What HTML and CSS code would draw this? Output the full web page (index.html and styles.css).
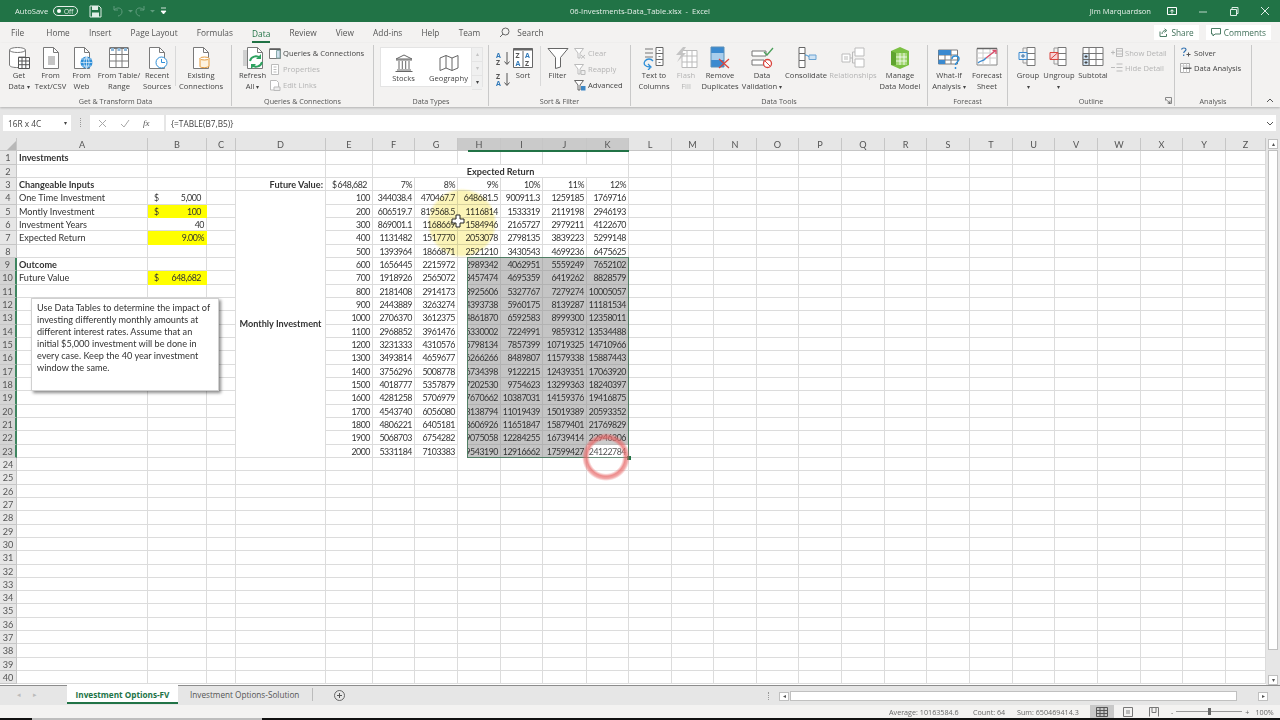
FILE: index.html
```html
<!DOCTYPE html>
<html>
	<head>
		<meta charset="utf-8" />
		<title>06-Investments-Data_Table.xlsx - Excel</title>
		<link rel="stylesheet" href="styles.css">
	</head>
	<body>
		<svg class="sprite">
			<symbol id="doc" viewBox="0 0 24 24"><path d="M4.5 1.5h10l5 5v16h-15z" fill="#fff" stroke="#7a7a7a"/><path d="M14.5 1.5v5h5" fill="none" stroke="#7a7a7a"/></symbol>
			<symbol id="tbl" viewBox="0 0 24 24"><path d="M2.5 2.5h19v19h-19zM2.5 8.5h19M2.5 15h19M9 2.5v19M15 2.5v19" fill="#fff" stroke="#7a7a7a"/></symbol>
		</svg>

		<header class="titlebar">
			<div class="qat">
				<span class="autosave">AutoSave</span>
				<span class="toggle"><i></i>Off</span>
				<svg class="qat-save" width="13" height="13" viewBox="0 0 13 13"><path d="M1 1h9l2 2v9H1z" fill="none" stroke="#dfeee6"/><path d="M3 1h6v4H3zM3 7.5h7V12H3z" fill="#dfeee6"/></svg>
				<svg class="qat-undo" width="24" height="12" viewBox="0 0 24 12"><path d="M3 1v4h4M3 5c3-3 8-3 8 2 0 2-2 4-4 4" fill="none" stroke="#5f9c7d"/><path d="M17 5h5l-2.500 2.500z" fill="#5f9c7d"/></svg>
				<svg class="qat-redo" width="24" height="12" viewBox="0 0 24 12"><path d="M11 1v4H7M11 5c-3-3-8-3-8 2 0 2 2 4 4 4" fill="none" stroke="#5f9c7d"/><path d="M17 5h5l-2.500 2.500z" fill="#5f9c7d"/></svg>
				<svg class="qat-more" width="7" height="8" viewBox="0 0 7 8"><path d="M1 1h5M1 4h5l-2.500 3z" fill="#fff" stroke="#fff" stroke-width=".8"/></svg>
			</div>
			<div class="doc-title">06-Investments-Data_Table.xlsx&nbsp; -&nbsp; Excel</div>
			<div class="win">
				<span class="user">Jim Marquardson</span>
				<svg width="10" height="9" viewBox="0 0 10 9"><path d="M.5.5h9v7h-9z" fill="none" stroke="#fff"/><path d="M5 6.500V3M3.200 4.500 5 2.700l1.800 1.800" fill="none" stroke="#fff"/></svg>
				<svg width="10" height="9" viewBox="0 0 10 9"><path d="M1 5h8" stroke="#bcd6c8"/></svg>
				<svg width="10" height="9" viewBox="0 0 10 9"><path d="M1.500 2.500h6v6h-6zM3 2.500V.5h6v6H7.500" fill="none" stroke="#dfeee6"/></svg>
				<svg width="10" height="10" viewBox="0 0 10 10"><path d="M1 1l8 8M9 1 1 9" stroke="#dfeee6"/></svg>
			</div>
		</header>

		<nav class="tabs">
			<a>File</a><a class="home">Home</a><a>Insert</a><a>Page Layout</a><a>Formulas</a><a class="on">Data</a><a>Review</a><a>View</a><a>Add-ins</a><a>Help</a><a>Team</a>
			<a class="search"><svg width="11" height="11" viewBox="0 0 11 11"><circle cx="6.500" cy="4.500" r="3.500" fill="none" stroke="#666"/><path d="M4 7 1 10" stroke="#666"/></svg>Search</a>
			<div class="share-box">
				<span class="pill"><svg width="9" height="9" viewBox="0 0 9 9"><path d="M1 3.500v5h6.500V6M3 6c0-2 1.500-3.500 3.500-3.500M5.500 .8 7.800 2.500 5.500 4.400" fill="none" stroke="#4d7d66"/></svg>Share</span>
				<span class="pill"><svg width="10" height="9" viewBox="0 0 10 9"><path d="M.5.5h9v5.500H4L2 8V6H.5z" fill="none" stroke="#4d7d66"/></svg>Comments</span>
			</div>
		</nav>

		<section class="ribbon">
			<div class="group g-get">
				<div class="btns">
					<div class="btn">
						<svg width="24" height="24" viewBox="0 0 24 24"><path d="M2.500 4v15c0 1.500 3 2.500 7 2.500h2V11h7V4" fill="#fff" stroke="#7a7a7a"/><ellipse cx="10.500" cy="4" rx="8" ry="2.500" fill="#fff" stroke="#7a7a7a"/><path d="M11.500 11.500h11v11h-11zM11.500 15h11M11.500 18.700h11M15 11.500v11M18.800 11.500v11" fill="#fff" stroke="#555"/></svg>
						<span>Get<br>Data <b>▾</b></span>
					</div>
					<div class="btn">
						<svg width="24" height="24" viewBox="0 0 24 24"><use href="#doc"/><path d="M9 10h7v9H9z" fill="#c4c4c4"/></svg>
						<span>From<br>Text/CSV</span>
					</div>
					<div class="btn">
						<svg width="24" height="24" viewBox="0 0 24 24"><use href="#doc"/><circle cx="16.500" cy="16.500" r="6" fill="#2f8fd8"/><path d="M10.500 16.500h12M16.500 10.500v12M12 13h9M12 20h9M16.500 10.500c-3.500 4-3.500 8 0 12M16.500 10.500c3.500 4 3.500 8 0 12" fill="none" stroke="#fff" stroke-width=".6"/></svg>
						<span>From<br>Web</span>
					</div>
					<div class="btn">
						<svg width="24" height="24" viewBox="0 0 24 24"><use href="#tbl"/><path d="M2.500 1h19v2h-19z" fill="#777"/><path d="M4 3.500h3M10.500 3.500h3M17 3.500h3" stroke="#8fb7d8" stroke-width="3"/></svg>
						<span>From Table/<br>Range</span>
					</div>
					<div class="btn">
						<svg width="24" height="24" viewBox="0 0 24 24"><use href="#doc"/><circle cx="16.500" cy="16.500" r="5.500" fill="#fff" stroke="#2f8fd8"/><path d="M16.500 13v3.500H20" fill="none" stroke="#2f8fd8"/></svg>
						<span>Recent<br>Sources</span>
					</div>
					<div class="btn btn-sep">
						<svg width="24" height="24" viewBox="0 0 24 24"><use href="#doc"/><path d="M11 12.500v8c0 1 5 2 9 0v-8z" fill="#fdf3e0" stroke="#e59b3a"/><ellipse cx="15.500" cy="12.500" rx="4.500" ry="1.500" fill="#fff" stroke="#e59b3a"/></svg>
						<span>Existing<br>Connections</span>
					</div>
				</div>
				<div class="group-label">Get &amp; Transform Data</div>
			</div>

			<div class="group g-queries">
				<div class="btns">
					<div class="btn">
						<svg width="24" height="24" viewBox="0 0 24 24"><path d="M2 4h7v16H2z" fill="#d0d0d0"/><use href="#doc" x="2"/><path d="M9 15a6 6 0 0 1 10-3M21 16a6 6 0 0 1-10 3" fill="none" stroke="#2da15f" stroke-width="2"/><path d="M20 8v5h-5zM10 23v-5h5z" fill="#2da15f"/></svg>
						<span>Refresh<br>All <b>▾</b></span>
					</div>
					<div class="small-list">
						<div class="small"><svg width="12" height="11" viewBox="0 0 12 11"><path d="M.5 1.500h11v9H.5z" fill="#fff" stroke="#777"/><path d="M.5 1h11" stroke="#555" stroke-width="1.500"/><path d="M7.500 2.500h3.500v7.500H7.500z" fill="#cfe0ee" stroke="#8aa"/></svg>Queries &amp; Connections</div>
						<div class="small dim"><svg width="12" height="11" viewBox="0 0 12 11"><path d="M2.500.5h7v10h-7z" fill="#fff" stroke="#bbb"/><path d="M4.500 3h3M4.500 5.500h3M4.500 8h3" stroke="#bbb"/></svg>Properties</div>
						<div class="small dim"><svg width="12" height="11" viewBox="0 0 12 11"><path d="M1.500.5h6l2 2V10h-8z" fill="#fff" stroke="#bbb"/><path d="M5 7h6v3.500H5z" fill="#eee" stroke="#bbb"/></svg>Edit Links</div>
					</div>
				</div>
				<div class="group-label">Queries &amp; Connections</div>
			</div>

			<div class="group g-types">
				<div class="gallery">
					<div class="gallery-item">
						<svg width="20" height="18" viewBox="0 0 20 18"><path d="M10 1 2 5h16zM2 6h16M3 16h14M1.500 17.500h17M5 7v8M8.300 7v8M11.700 7v8M15 7v8" fill="none" stroke="#666"/></svg>
						<span>Stocks</span>
					</div>
					<div class="gallery-item">
						<svg width="20" height="18" viewBox="0 0 20 18"><path d="M1 4l6-2.500 6 2.500 6-2.500V14l-6 2.500L7 14l-6 2.500zM7 1.500V14M13 4v12.500" fill="#fff" stroke="#666"/></svg>
						<span>Geography</span>
					</div>
					<div class="gallery-scroll">
						<i class="dim-arrow">▴</i><i class="dim-arrow">▾</i><i>▾</i>
					</div>
				</div>
				<div class="group-label">Data Types</div>
			</div>

			<div class="group g-sort">
				<div class="btns">
					<div class="sort-pair">
						<svg width="15" height="15" viewBox="0 0 15 15"><text x="0" y="6.500" class="az blue">A</text><text x="0" y="13.500" class="az">Z</text><path d="M11 1v12M8.500 10.500 11 13.500l2.500-3" fill="none" stroke="#555"/></svg>
						<svg width="15" height="15" viewBox="0 0 15 15"><text x="0" y="6.500" class="az">Z</text><text x="0" y="13.500" class="az blue">A</text><path d="M11 1v12M8.500 10.500 11 13.500l2.500-3" fill="none" stroke="#555"/></svg>
					</div>
					<div class="btn btn-sort">
						<svg width="20" height="20" viewBox="0 0 20 20"><path d="M.5.500h19v19H.5z" fill="#fff" stroke="#666"/><path d="M.5 1.500h19" stroke="#666" stroke-width="2"/><path d="M10 3v16" stroke="#666"/><text x="2.500" y="9.500" class="az">Z</text><text x="2.500" y="17.500" class="az blue">A</text><text x="12" y="9.500" class="az blue">A</text><text x="12" y="17.500" class="az">Z</text></svg>
						<span>Sort</span>
					</div>
					<div class="btn btn-sep btn-filter">
						<svg width="24" height="24" viewBox="0 0 24 24"><path d="M2 2.500h20l-7.500 9V21l-5 1.500v-11z" fill="#fff" stroke="#666"/></svg>
						<span>Filter</span>
					</div>
					<div class="small-list">
						<div class="small dim"><svg width="12" height="11" viewBox="0 0 12 11"><path d="M.5.500h9L6 5v5H4V5z" fill="#fff" stroke="#bbb"/><path d="M7 7l4 3.500M11 7l-4 3.500" stroke="#bbb"/></svg>Clear</div>
						<div class="small dim"><svg width="12" height="11" viewBox="0 0 12 11"><path d="M.5.500h9L6 5v5H4V5z" fill="#fff" stroke="#bbb"/><path d="M7 6.500h4v4H7z" fill="#eee" stroke="#bbb"/></svg>Reapply</div>
						<div class="small"><svg width="12" height="11" viewBox="0 0 12 11"><path d="M.5.500h9L6 5v5H4V5z" fill="#fff" stroke="#666"/><path d="M7 6h4.500v4.500H7z" fill="#3c86c4"/></svg>Advanced</div>
					</div>
				</div>
				<div class="group-label">Sort &amp; Filter</div>
			</div>

			<div class="group g-tools">
				<div class="btns">
					<div class="btn">
						<svg width="24" height="24" viewBox="0 0 24 24"><path d="M3 3h8M3 7h8M3 11h8" stroke="#777"/><path d="M14 1.500h7v18h-7zM14 7.500h7M14 13.500h7" fill="#fff" stroke="#666"/><path d="M16.500 4.500h2M16.500 10.500h2M16.500 16.500h2" stroke="#777"/><path d="M11 15a5 5 0 0 0-8 0c-2 3 0 6 5 6M6 18l3 3-3 3" fill="none" stroke="#2f8fd8" stroke-width="1.300"/></svg>
						<span>Text to<br>Columns</span>
					</div>
					<div class="btn dim">
						<svg width="24" height="24" viewBox="0 0 24 24"><path d="M8 4.500h15v17H8zM8 10h15M8 16h15M13 4.500v17M18 4.500v17" fill="#fff" stroke="#bbb"/><path d="M9 1 2 9h5l-4 7 9-9H8l4-6z" fill="#c4c4c4"/></svg>
						<span>Flash<br>Fill</span>
					</div>
					<div class="btn">
						<svg width="24" height="24" viewBox="0 0 24 24"><path d="M3 1h13v6H3z" fill="#3b8ad0"/><path d="M3 7h13v7H3z" fill="#a8cdec"/><path d="M3 14h13v7H3z" fill="#3b8ad0"/><path d="M3 1h13v20H3z" fill="none" stroke="#5b8fb8"/><path d="M11 13l10 9M21 13l-10 9" stroke="#d9453e" stroke-width="1.300"/></svg>
						<span>Remove<br>Duplicates</span>
					</div>
					<div class="btn">
						<svg width="24" height="24" viewBox="0 0 24 24"><path d="M2 5h14v5H2zM2 14h12v5H2z" fill="#fff" stroke="#777"/><path d="M14 6l3 3 6-7" fill="none" stroke="#4ba05b" stroke-width="1.300"/><circle cx="17.500" cy="17.500" r="4" fill="#fff" stroke="#d9453e" stroke-width="1.300"/><path d="M15 15l5 5" stroke="#d9453e"/></svg>
						<span>Data<br>Validation <b>▾</b></span>
					</div>
					<div class="btn">
						<svg width="24" height="24" viewBox="0 0 24 24"><path d="M5 1.500h6v6H5zM5 7.500h6v7H5zM5 14.500h6v7H5z" fill="#fff" stroke="#666"/><path d="M11 9c3 0 3 2 5 2h3" fill="none" stroke="#2f8fd8"/><path d="M15 9h7v4.500h-7z" fill="#cfe3f4" stroke="#6aa3d2"/></svg>
						<span>Consolidate</span>
					</div>
					<div class="btn dim">
						<svg width="24" height="24" viewBox="0 0 24 24"><path d="M1 8h8v8H1zM14 2h9v8h-9zM14 13h9v8h-9z" fill="#fff" stroke="#bbb"/><path d="M9 12h2.500V6H14M11.500 12v5H14M3 11h4M3 13h4" fill="none" stroke="#bbb"/></svg>
						<span>Relationships</span>
					</div>
					<div class="btn">
						<svg width="24" height="24" viewBox="0 0 24 24"><path d="M3 5l9-4 9 4v14l-9 4-9-4z" fill="#7bc043"/><path d="M8 7h11v12H8z" fill="#a6d878"/><path d="M8 11h11M8 15h11M12 7v12M16 7v12" stroke="#fff" stroke-width=".8"/><path d="M3 5l5 2v12l-5 0z" fill="#5fa32f"/></svg>
						<span>Manage<br>Data Model</span>
					</div>
				</div>
				<div class="group-label">Data Tools</div>
			</div>

			<div class="group g-forecast">
				<div class="btns">
					<div class="btn">
						<svg width="24" height="24" viewBox="0 0 24 24"><path d="M1.500 4h19v14h-19zM1.500 9h19M1.500 14h19M8 4v14M14 4v14" fill="#fff" stroke="#7a7a7a"/><path d="M1.500 4H8v5H1.500zM1.500 14H8v4H1.500zM8 4h6v5H8z" fill="#3b8ad0"/><path d="M15 13c0-4 7-4 7 0 0 3-3.500 3-3.500 6" fill="none" stroke="#2f8fd8" stroke-width="1.500"/><path d="M18.500 21v2" stroke="#2f8fd8" stroke-width="1.500"/></svg>
						<span>What-If<br>Analysis <b>▾</b></span>
					</div>
					<div class="btn">
						<svg width="24" height="24" viewBox="0 0 24 24"><path d="M2 2.500h20V19H2z" fill="#fff" stroke="#888"/><path d="M2 7h20M2 12h20M8 2.500V19M15 2.500V19" stroke="#ccc"/><path d="M2 2.500h20" stroke="#666" stroke-width="1.500"/><path d="M3 17c3-3 5-1 8-5" fill="none" stroke="#3b8ad0" stroke-width="1.300"/><path d="M11 12l9-7M17.500 4.500H21v3.500" fill="none" stroke="#d94c6a" stroke-width="1.300"/></svg>
						<span>Forecast<br>Sheet</span>
					</div>
				</div>
				<div class="group-label">Forecast</div>
			</div>

			<div class="group g-outline">
				<div class="btns">
					<div class="btn">
						<svg width="24" height="24" viewBox="0 0 24 24"><path d="M11 1.500h8v18h-8zM11 7.500h8M11 13.500h8" fill="#fff" stroke="#777"/><path d="M11 2H7v15h4" fill="none" stroke="#999"/><path d="M3 6.500h8v7H3z" fill="#eaf2f9" stroke="#3b8ad0"/><path d="M5 10h4M7 8v4" stroke="#3b6fa0"/></svg>
						<span>Group<br><b>▾</b></span>
					</div>
					<div class="btn">
						<svg width="24" height="24" viewBox="0 0 24 24"><path d="M11 1.500h8v18h-8zM11 7.500h8M11 13.500h8" fill="#fff" stroke="#777"/><path d="M11 2H7v4M7 14v4h4" fill="none" stroke="#999"/><path d="M3 6.500h8v7H3z" fill="#f7d3d6"/><path d="M3 6.500h8v7H3zM3 13.500l8-7" fill="none" stroke="#d9453e"/></svg>
						<span>Ungroup<br><b>▾</b></span>
					</div>
					<div class="btn">
						<svg width="24" height="24" viewBox="0 0 24 24"><path d="M2 1.500h20v18H2zM2 7.500h20M2 13.500h20M8 1.500v18M15 1.500v18" fill="#fff" stroke="#777"/><path d="M2 7.500h6v6H2zM2 13.500h6v6H2z" fill="#cfe3f4" stroke="#666"/><path d="M3.500 10.500h3M5 9v3M3.500 16.500h3M5 15v3" stroke="#444"/></svg>
						<span>Subtotal</span>
					</div>
					<div class="small-list narrow">
						<div class="small dim"><svg width="12" height="11" viewBox="0 0 12 11"><path d="M5.500 1.500h6v8h-6zM5.500 4h6M5.500 7h6" fill="none" stroke="#bbb"/><path d="M0 5.500h4M2 3.500v4" stroke="#bbb"/></svg>Show Detail</div>
						<div class="small dim"><svg width="12" height="11" viewBox="0 0 12 11"><path d="M5.500 2h6M5.500 5.500h6M5.500 9h6" stroke="#bbb"/><path d="M0 5.500h4" stroke="#bbb"/></svg>Hide Detail</div>
					</div>
				</div>
				<div class="group-label">Outline</div>
				<svg class="launcher" width="7" height="7" viewBox="0 0 7 7"><path d="M.5 3.500V.5h6v6h-3" fill="none" stroke="#888"/><path d="M1 2.500 5 6M5 3.500V6H2.500" fill="none" stroke="#666" stroke-width=".8"/></svg>
			</div>

			<div class="group g-analysis">
				<div class="btns">
					<div class="small-list narrow">
						<div class="small"><svg width="12" height="11" viewBox="0 0 12 11"><path d="M1.500 2.500C2 .5 6 .5 6 2.500 6 4 4 4 3.700 6" fill="none" stroke="#2f6fb0" stroke-width="1.200"/><path d="M3.700 7.500v1.500" stroke="#2f6fb0" stroke-width="1.200"/><path d="M6.500 7.500h4M8.500 5.500v4" stroke="#555"/></svg>Solver</div>
						<div class="small"><svg width="12" height="11" viewBox="0 0 12 11"><path d="M.5 1.500h9v9h-9z" fill="#fff" stroke="#aaa"/><path d="M.5 4h9M3.500 1.500v9M6.500 1.500v9" stroke="#ccc"/><path d="M3 5.500h8.500v1.500H3z" fill="#666"/></svg>Data Analysis</div>
					</div>
				</div>
				<div class="group-label">Analysis</div>
			</div>
			<svg class="collapse" width="8" height="5" viewBox="0 0 8 5"><path d="M1 4l3-3 3 3" fill="none" stroke="#555"/></svg>
		</section>

		<div class="formula-bar">
			<div class="name-box">16R x 4C<b>▾</b></div>
			<i class="dots"></i>
			<div class="fx-box">
				<svg width="9" height="9" viewBox="0 0 9 9"><path d="M1 1l7 7M8 1 1 8" stroke="#a8a8a8"/></svg>
				<svg width="10" height="9" viewBox="0 0 10 9"><path d="M1 5l3 3 5-7" fill="none" stroke="#a8a8a8"/></svg>
				<em>fx</em>
			</div>
			<div class="formula">{=TABLE(B7,B5)}<svg width="8" height="5" viewBox="0 0 8 5"><path d="M1 1l3 3 3-3" fill="none" stroke="#555"/></svg></div>
		</div>

		<div class="sheet-wrap">
			<div class="sheet" id="sheet">
				<div class="corner"></div>
				<div class="note">Use Data Tables to determine the impact of investing differently monthly amounts at different interest rates. Assume that an initial $5,000 investment will be done in every case. Keep the 40 year investment window the same.</div>
				<div class="col-mark"></div>
				<div class="selection"><i></i></div>
				<div class="spot"></div>
				<svg class="cross" width="14" height="14" viewBox="0 0 14 14"><path d="M5 1h4v4h4v4H9v4H5V9H1V5h4z" fill="#fff" stroke="#222"/></svg>
				<div class="ring"></div>
			</div>
			<div class="vscroll">
				<div class="vbtn">▴</div>
				<div class="vthumb"></div>
				<div class="vbtn">▾</div>
			</div>
		</div>

		<div class="sheet-tabs">
			<div class="tab-arrows"><span>◂</span><span>▸</span></div>
			<div class="tab on">Investment Options-FV</div>
			<div class="tab">Investment Options-Solution</div>
			<i class="tab-sep"></i>
			<svg class="tab-add" width="11" height="11" viewBox="0 0 11 11"><circle cx="5.500" cy="5.500" r="5" fill="none" stroke="#666"/><path d="M3 5.500h5M5.500 3v5" stroke="#555"/></svg>
			<i class="dots"></i>
			<div class="hscroll">
				<div class="hbtn">◂</div>
				<div class="hthumb"></div>
				<div class="hrest"></div>
				<div class="hbtn">▸</div>
			</div>
		</div>

		<footer class="status">
			<span class="stat avg">Average: 10163584.6</span>
			<span class="stat cnt">Count: 64</span>
			<span class="stat sum">Sum: 650469414.3</span>
			<span class="view on"><svg width="12" height="10" viewBox="0 0 12 10"><path d="M.5.500h11v9H.5zM.5 3.500h11M.5 6.500h11M4 .5v9M8 .5v9" fill="none" stroke="#555"/></svg></span>
			<span class="view"><svg width="10" height="10" viewBox="0 0 10 10"><path d="M.5.500h9v9h-9z" fill="none" stroke="#777"/><path d="M3 3h4v4H3z" fill="#bbb"/></svg></span>
			<span class="view"><svg width="10" height="10" viewBox="0 0 10 10"><path d="M.5 9.500V.5h9v9M3 .5v5h4V.5" fill="none" stroke="#777"/></svg></span>
			<div class="zoom">
				<span>-</span>
				<div class="slider"><i></i></div>
				<span>+</span>
			</div>
			<span class="zoom-val">100%</span>
		</footer>
		<div class="edge"><i></i></div>

		<script src="sheet.js"></script>
	</body>
</html>
```

FILE: styles.css
```css
body {
	margin: 0px;
	width: 1280px;
	height: 720px;
	overflow: hidden;
	background-color: #f3f2f1;
	font-family: "Open Sans", "Noto Sans", sans-serif;
	font-size: 7.6px;
	color: #444;
}

.sprite {
	display: none;
}

/* title bar */
.titlebar {
	height: 22px;
	background-color: #217346;
	color: #e6f0ea;
	display: grid;
	grid-template-columns: 1fr auto 1fr;
	align-items: center;
	font-size: 7.6px;
}

.qat {
	display: flex;
	align-items: center;
	padding-left: 15px;
}

.autosave {
	width: 38px;
}

.toggle {
	width: 25px;
	height: 10px;
	box-sizing: border-box;
	border: 1px solid #e6f0ea;
	border-radius: 6px;
	display: flex;
	align-items: center;
	gap: 3px;
	padding-left: 3px;
	font-size: 6.5px;
}

.toggle i {
	width: 4px;
	height: 4px;
	border-radius: 50%;
	background-color: #fff;
}

.qat-save {
	margin-left: 11px;
}

.qat-undo {
	margin-left: 9px;
}

.qat-redo {
	margin-left: -2px;
}

.qat-more {
	margin-left: 3px;
}

.win {
	display: flex;
	align-items: center;
	justify-content: flex-end;
	gap: 21px;
	padding-right: 10px;
}

.user {
	margin-right: -5px;
}

/* tabs */
.tabs {
	height: 21px;
	display: flex;
	align-items: center;
	gap: 19.2px;
	padding-left: 11px;
	font-size: 8.3px;
	color: #555;
}

.tabs a {
	line-height: 20px;
}

.tabs a.home {
	margin-left: 3px;
}

.tabs a.on {
	color: #217346;
	border-bottom: 1px solid #217346;
	box-shadow: 0 1px 0 #217346;
	height: 17px;
	line-height: 20px;
	margin-top: 1px;
}

.search {
	display: flex;
	align-items: center;
	gap: 7px;
}

.share-box {
	margin-left: auto;
	display: flex;
	gap: 7px;
	padding-right: 9px;
}

.pill {
	background-color: #fff;
	color: #3f6f58;
	height: 15px;
	padding: 0 5px;
	display: flex;
	align-items: center;
	gap: 3px;
}

/* ribbon */
.ribbon {
	height: 64px;
	display: flex;
	position: relative;
	box-shadow: 0 1px 2px rgba(0, 0, 0, .22);
	z-index: 2;
}

.group {
	position: relative;
	display: flex;
	flex-direction: column;
	box-sizing: border-box;
	height: 61px;
	margin-top: 2px;
	border-right: 1px solid #c9c9c9;
	padding-top: 1px;
}

.group-label {
	position: absolute;
	left: 0;
	right: 0;
	bottom: -1px;
	text-align: center;
	line-height: 12px;
	font-size: 7.2px;
	color: #555;
}

.btns {
	display: grid;
	grid-auto-flow: column;
	align-items: start;
}

.btn {
	display: flex;
	flex-direction: column;
	align-items: center;
	text-align: center;
	white-space: nowrap;
	line-height: 10.5px;
}

.btn svg {
	display: block;
	flex-shrink: 0;
}

.btn b {
	font-size: 6px;
	font-weight: normal;
}

.btn-sep {
	border-left: 1px solid #d9d9d9;
}

.dim {
	color: #b4b4b4;
}

.small-list {
	display: flex;
	flex-direction: column;
	white-space: nowrap;
	margin-top: -1px;
}

.small {
	height: 16px;
	display: flex;
	align-items: center;
	gap: 2px;
}

.narrow .small {
	height: 15px;
}

.g-get {
	width: 232px;
	padding-left: 4px;
}

.g-get .btns {
	grid-template-columns: 30px 33px 29px 46px 30px 54px;
}

.g-get .btn-sep {
	margin-left: 3px;
	height: 40px;
}

.g-queries {
	width: 142px;
	padding-left: 4px;
}

.g-queries .btns {
	grid-template-columns: 33px auto;
}

.g-types {
	width: 115px;
}

.gallery {
	margin: 1px 0 0 6px;
	width: 103px;
	height: 40px;
	background-color: #fff;
	display: flex;
	box-sizing: border-box;
	border: 1px solid #e4e4e4;
}

.gallery-item {
	flex: 1;
	display: flex;
	flex-direction: column;
	align-items: center;
	gap: 1px;
	padding-top: 6px;
}

.gallery-scroll {
	width: 10px;
	background-color: #fff;
	display: flex;
	flex-direction: column;
	border-left: 1px solid #e4e4e4;
}

.gallery-scroll i {
	flex: 1;
	font-style: normal;
	font-size: 6px;
	text-align: center;
	line-height: 13px;
	background-color: #f0f0f0;
	border-bottom: 1px solid #e4e4e4;
}

.gallery-scroll i.dim-arrow {
	color: #c4c4c4;
}

.g-sort {
	width: 142px;
	padding-left: 7px;
}

.g-sort .btns {
	grid-template-columns: 15px 29px 34px auto;
}

.sort-pair {
	display: flex;
	flex-direction: column;
	gap: 6px;
	padding-top: 5px;
}

.az {
	font-size: 7px;
	font-weight: bold;
	fill: #555;
}

.blue {
	fill: #2f78b8;
}

.btn-sort {
	padding-right: 5px;
	padding-top: 2px;
}

.btn-sort svg {
	margin-bottom: 2px;
}

.btn-filter {
	height: 40px;
}

.g-tools {
	width: 297px;
	padding-left: 7px;
}

.g-tools .btns {
	grid-template-columns: 32px 32px 36px 48px 40px 54px 40px;
}

.g-forecast {
	width: 80px;
	padding-left: 1px;
}

.g-forecast .btns {
	grid-template-columns: 40px 36px;
}

.g-outline {
	width: 167px;
	padding-left: 5px;
}

.g-outline .btns {
	grid-template-columns: 30px 32px 36px auto;
}

.launcher {
	position: absolute;
	right: 2px;
	bottom: 2px;
}

.g-analysis {
	width: 77px;
	padding-left: 5px;
}

.collapse {
	position: absolute;
	right: 6px;
	bottom: 4px;
}

/* formula bar */
.formula-bar {
	height: 31px;
	box-sizing: border-box;
	background-color: #e6e6e6;
	display: flex;
	align-items: flex-start;
	padding: 8px 4px 0 3px;
	font-size: 8.3px;
}

.name-box {
	width: 68px;
	height: 16px;
	box-sizing: border-box;
	background-color: #fff;
	display: flex;
	align-items: center;
	justify-content: space-between;
	padding: 0 4px 0 5px;
}

.name-box b {
	font-size: 6px;
	font-weight: normal;
}

.formula-bar .dots {
	margin: 3px 9px 0 9px;
	height: 9px;
}

.dots {
	width: 0;
	border-left: 1px dotted #999;
}

.fx-box {
	width: 74px;
	height: 16px;
	background-color: #fff;
	display: flex;
	align-items: center;
	gap: 13px;
	padding-left: 8px;
	box-sizing: border-box;
}

.fx-box em {
	font-family: "Liberation Serif", serif;
	font-size: 9px;
	color: #555;
}

.formula {
	flex: 1;
	height: 16px;
	margin-left: 2px;
	background-color: #fff;
	display: flex;
	align-items: center;
	justify-content: space-between;
	padding: 0 2px 0 5px;
}

/* sheet */
.sheet-wrap {
	height: 547px;
	display: flex;
}

.sheet {
	position: relative;
	width: 1266px;
	background-color: #fff;
	display: grid;
	grid-template-columns: 17px 131px 59px 29px 90px 47px 42px 43px 43px 42px 44px 42px 43px 42px 43px 42px 43px 43px 42px 43px 43px 42px 43px 43px 42px 43px 40px;
	grid-auto-rows: 13.33px;
	font-family: "Lato", "Noto Sans", sans-serif;
	font-size: 9.15px;
	color: #333;
	overflow: hidden;
}

.cell {
	box-sizing: border-box;
	border-right: 1px solid #dcdcdc;
	border-bottom: 1px solid #dcdcdc;
	padding: 0 2px;
	line-height: 14px;
	white-space: nowrap;
	overflow: hidden;
}

.num {
	font-size: 8.8px;
	letter-spacing: -.45px;
	padding-left: 0;
}

.head {
	background-color: #e6e6e6;
	border-color: #c6c6c6;
	text-align: center;
	color: #555;
	padding: 0;
}

.head.on {
	background-color: #cacaca;
}

.row-head.on {
	background-color: #d4d4d4;
	border-right: 2px solid #3f8560;
}

.corner {
	position: absolute;
	left: 7px;
	top: 3px;
	width: 0;
	height: 0;
	border-left: 9px solid transparent;
	border-bottom: 9px solid #b8b8b8;
}

.bold {
	font-weight: bold;
}

.right {
	text-align: right;
}

.center {
	text-align: center;
}

.yellow {
	background-color: #ffff00;
	border-color: #ffff00;
}

.money {
	display: flex;
	justify-content: space-between;
	padding: 0 5px 0 6px;
}

.merge-d {
	grid-row: span 20;
	display: flex;
	align-items: center;
	justify-content: center;
	padding: 0;
}

.merge-f {
	grid-column: span 6;
}

.sel {
	background-color: #c4c4c4;
	border-color: #b2b2b2;
}

.cut {
	margin-left: 10px;
	direction: rtl;
}

.note {
	position: absolute;
	left: 31px;
	top: 160px;
	width: 188px;
	height: 93px;
	box-sizing: border-box;
	padding: 3px 5px;
	background-color: #fff;
	border: 1px solid #d0d0d0;
	box-shadow: 2px 2px 3px rgba(0, 0, 0, .45);
	line-height: 12px;
}

.col-mark {
	position: absolute;
	left: 468px;
	top: 12px;
	width: 161px;
	height: 1.5px;
	background-color: #217346;
}

.selection {
	position: absolute;
	left: 467px;
	top: 119px;
	width: 160px;
	height: 199px;
	border: 1.5px solid #507f64;
}

.selection i {
	position: absolute;
	right: -3px;
	bottom: -3px;
	width: 4px;
	height: 4px;
	background-color: #217346;
}

.spot {
	position: absolute;
	left: 427px;
	top: 50px;
	width: 70px;
	height: 70px;
	border-radius: 50%;
	background: radial-gradient(circle closest-side, #fbf4b8 90%, #ffffff 100%);
	mix-blend-mode: multiply;
}

.cross {
	position: absolute;
	left: 451px;
	top: 76px;
}

.ring {
	position: absolute;
	left: 582px;
	top: 295px;
	width: 48px;
	height: 48px;
	border-radius: 50%;
	background: radial-gradient(circle closest-side, rgba(255, 255, 255, .15) 68%, rgba(232, 110, 110, .8) 80%, rgba(232, 110, 110, .6) 90%, rgba(232, 110, 110, 0) 100%);
}

/* scrollbars */
.vscroll {
	width: 14px;
	background-color: #e6e6e6;
	display: flex;
	flex-direction: column;
	align-items: center;
	padding: 1px 0 0 0;
	box-sizing: border-box;
}

.vbtn {
	width: 10px;
	height: 10px;
	background-color: #fff;
	border: 1px solid #c0c0c0;
	box-sizing: border-box;
	font-size: 6px;
	line-height: 8px;
	text-align: center;
	color: #555;
}

.vthumb {
	width: 10px;
	height: 510px;
	margin: 1px 0 25px 0;
	background-color: #fff;
	border: 1px solid #c0c0c0;
	box-sizing: border-box;
}

.sheet-tabs {
	height: 20px;
	box-sizing: border-box;
	border-top: 1px solid #8c8c8c;
	background-color: #e6e6e6;
	display: flex;
	align-items: flex-start;
	position: relative;
	font-size: 8.2px;
}

.tab-arrows {
	width: 67px;
	display: flex;
	gap: 12px;
	padding-left: 17px;
	box-sizing: border-box;
	color: #bbb;
	line-height: 18px;
	font-size: 7px;
}

.tab {
	height: 18px;
	line-height: 17px;
	padding: 0 12px;
	color: #555;
}

.tab.on {
	width: 111px;
	box-sizing: border-box;
	padding: 0;
	text-align: center;
	background-color: #fff;
	color: #217346;
	font-weight: bold;
	border-bottom: 2px solid #217346;
	margin-top: -1px;
	height: 19px;
	line-height: 19px;
}

.tab-sep {
	width: 1px;
	height: 13px;
	background-color: #bbb;
	margin: 2px 0 0 1px;
}

.tab-add {
	margin: 4px 0 0 21px;
}

.sheet-tabs .dots {
	position: absolute;
	left: 768px;
	top: 6px;
	height: 8px;
}

.hscroll {
	position: absolute;
	left: 779px;
	top: 5px;
	width: 489px;
	display: flex;
	align-items: center;
	color: #555;
}

.hbtn {
	width: 10px;
	height: 9px;
	background-color: #fff;
	border: 1px solid #c0c0c0;
	box-sizing: border-box;
	font-size: 6px;
	line-height: 7px;
	text-align: center;
}

.hthumb {
	width: 447px;
	height: 10px;
	margin-left: 1px;
	background-color: #fff;
	border: 1px solid #c0c0c0;
	box-sizing: border-box;
}

.hrest {
	width: 21px;
}

/* status bar */
.status {
	height: 13px;
	display: flex;
	align-items: center;
	font-size: 7.2px;
	color: #666;
	white-space: nowrap;
	padding-left: 889px;
}

.stat {
	flex-shrink: 0;
}

.avg {
	width: 84px;
}

.cnt {
	width: 44px;
}

.sum {
	width: 73px;
}

.view {
	width: 24px;
	height: 13px;
	display: flex;
	align-items: center;
	justify-content: center;
	margin-right: 2px;
	flex-shrink: 0;
}

.view.on {
	background-color: #c8c8c8;
}

.zoom {
	margin-left: 3px;
	display: flex;
	align-items: center;
	gap: 3px;
}

.slider {
	width: 66px;
	height: 1px;
	background-color: #999;
	position: relative;
}

.slider i {
	position: absolute;
	left: 32px;
	top: -3px;
	width: 3px;
	height: 7px;
	background-color: #666;
}

.zoom-val {
	margin-left: 6px;
}

.edge {
	height: 2px;
	background-color: #111;
}

.edge i {
	display: block;
	margin-left: 32px;
	width: 230px;
	height: 2px;
	background-color: #bdbdbd;
}
```

FILE: sheet.js
```js
let sheet = document.getElementById("sheet");
let columns = "ABCDEFGHIJKLMNOPQRSTUVWXYZ".split("");

// data table: monthly amount followed by the values for 7% - 12%
let table = [
	[100, "344038.4", "470467.7", "648681.5", "900911.3", 1259185, 1769716],
	[200, "606519.7", "819568.5", 1116814, 1533319, 2119198, 2946193],
	[300, "869001.1", 1168669, 1584946, 2165727, 2979211, 4122670],
	[400, 1131482, 1517770, 2053078, 2798135, 3839223, 5299148],
	[500, 1393964, 1866871, 2521210, 3430543, 4699236, 6475625],
	[600, 1656445, 2215972, 2989342, 4062951, 5559249, 7652102],
	[700, 1918926, 2565072, 3457474, 4695359, 6419262, 8828579],
	[800, 2181408, 2914173, 3925606, 5327767, 7279274, 10005057],
	[900, 2443889, 3263274, 4393738, 5960175, 8139287, 11181534],
	[1000, 2706370, 3612375, 4861870, 6592583, 8999300, 12358011],
	[1100, 2968852, 3961476, 5330002, 7224991, 9859312, 13534488],
	[1200, 3231333, 4310576, 5798134, 7857399, 10719325, 14710966],
	[1300, 3493814, 4659677, 6266266, 8489807, 11579338, 15887443],
	[1400, 3756296, 5008778, 6734398, 9122215, 12439351, 17063920],
	[1500, 4018777, 5357879, 7202530, 9754623, 13299363, 18240397],
	[1600, 4281258, 5706979, 7670662, 10387031, 14159376, 19416875],
	[1700, 4543740, 6056080, 8138794, 11019439, 15019389, 20593352],
	[1800, 4806221, 6405181, 8606926, 11651847, 15879401, 21769829],
	[1900, 5068703, 6754282, 9075058, 12284255, 16739414, 22946306],
	[2000, 5331184, 7103383, 9543190, 12916662, 17599427, 24122784]
];

let cells = {
	A1: { text: "Investments", cls: "bold" },
	A3: { text: "Changeable Inputs", cls: "bold" },
	A4: { text: "One Time Investment" },
	A5: { text: "Montly Investment" },
	A6: { text: "Investment Years" },
	A7: { text: "Expected Return" },
	A9: { text: "Outcome", cls: "bold" },
	A10: { text: "Future Value" },
	B4: { money: "5,000" },
	B5: { money: "100", cls: "yellow" },
	B6: { text: "40", cls: "right num" },
	B7: { text: "9.00%", cls: "right num yellow" },
	B10: { money: "648,682", cls: "yellow" },
	D3: { text: "Future Value:", cls: "bold right" },
	D4: { text: "Monthly Investment", cls: "bold merge-d" },
	E3: { money: "648,682", cls: "right" },
	F2: { text: "Expected Return", cls: "bold center merge-f" },
	F3: { text: "7%", cls: "right num" },
	G3: { text: "8%", cls: "right num" },
	H3: { text: "9%", cls: "right num" },
	I3: { text: "10%", cls: "right num" },
	J3: { text: "11%", cls: "right num" },
	K3: { text: "12%", cls: "right num" }
};

table.forEach(function (row, r) {
	row.forEach(function (value, c) {
		let rowNum = r + 4;
		let cls = "right num";
		if (rowNum >= 9 && c >= 3 && !(rowNum == 23 && c == 6)) cls += " sel";
		if (rowNum >= 9 && c == 3) cls += " cut";
		cells["EFGHIJK"[c] + rowNum] = { text: value, cls: cls };
	});
});

// cells hidden under a merged cell
function covered(col, row) {
	if (col == "D" && row > 4 && row <= 23) return true;
	if (row == 2 && "GHIJK".indexOf(col) >= 0) return true;
	return false;
}

function addCell(text, cls) {
	let div = document.createElement("div");
	div.className = "cell " + cls;
	div.textContent = text;
	sheet.appendChild(div);
	return div;
}

addCell("", "head");
columns.forEach(function (col) {
	addCell(col, "head col-head" + ("HIJK".indexOf(col) >= 0 ? " on" : ""));
});

for (let row = 1; row <= 40; row++) {
	addCell(row, "head row-head" + (row >= 9 && row <= 23 ? " on" : ""));
	columns.forEach(function (col) {
		if (covered(col, row)) return;
		let data = cells[col + row] || {};
		let div = addCell(data.text || "", data.cls || "");
		if (data.money) {
			div.classList.add("money", "num");
			div.innerHTML = "<span>$</span><span>" + data.money + "</span>";
		}
	});
}
```
